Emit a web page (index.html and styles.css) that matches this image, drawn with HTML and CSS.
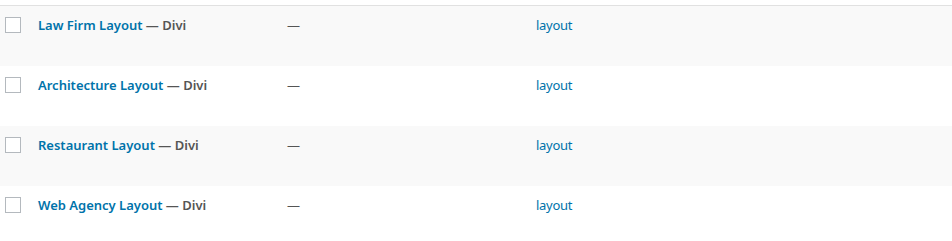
FILE: index.html
```html
<!DOCTYPE html>
<html>
    <head>
        <title>Layouts</title>
        <meta charset="UTF-8">
        <meta name="viewport" content="width=device-width, initial-scale=1.0">
        <link rel="stylesheet" href="styles.css">
    </head>
    <body>
        <div class="list-table">
            <div class="list-row alt">
                <div class="check-col"><span class="check-box"></span></div>
                <div class="title-col"><a class="row-title" href="#">Law Firm Layout</a><span class="post-state"> — Divi</span></div>
                <div class="plain-col">—</div>
                <div class="plain-col"><a class="type-link" href="#">layout</a></div>
            </div>
            <div class="list-row">
                <div class="check-col"><span class="check-box"></span></div>
                <div class="title-col"><a class="row-title" href="#">Architecture Layout</a><span class="post-state"> — Divi</span></div>
                <div class="plain-col">—</div>
                <div class="plain-col"><a class="type-link" href="#">layout</a></div>
            </div>
            <div class="list-row alt">
                <div class="check-col"><span class="check-box"></span></div>
                <div class="title-col"><a class="row-title" href="#">Restaurant Layout</a><span class="post-state"> — Divi</span></div>
                <div class="plain-col">—</div>
                <div class="plain-col"><a class="type-link" href="#">layout</a></div>
            </div>
            <div class="list-row">
                <div class="check-col"><span class="check-box"></span></div>
                <div class="title-col"><a class="row-title" href="#">Web Agency Layout</a><span class="post-state"> — Divi</span></div>
                <div class="plain-col">—</div>
                <div class="plain-col"><a class="type-link" href="#">layout</a></div>
            </div>
        </div>
    </body>
</html>
```

FILE: styles.css
```css
* {
  margin: 0;
  padding: 0;
  box-sizing: border-box;
}

body {
  font-family: "Noto Sans", "Open Sans", sans-serif;
  font-size: 13px;
  color: #555;
  background-color: #fff;
  width: 100vw;
  height: 100vh;
  overflow: hidden;
  padding-top: 5px;
}

.list-table {
  border-top: 1px solid #e1e1e1;
}

.list-row {
  display: grid;
  grid-template-columns: 28px 249px 249px 1fr;
  height: 60px;
  background-color: #fff;
}

.list-row.alt {
  background-color: #f9f9f9;
}

.check-col {
  padding: 11px 0 0 5px;
}

.check-box {
  display: block;
  width: 16px;
  height: 16px;
  border: 1px solid #b4b9be;
  background-color: #fff;
}

.title-col,
.plain-col {
  padding: 10px 10px 0 10px;
  line-height: 19px;
}

.title-col {
  font-weight: 600;
}

.row-title {
  color: #0073aa;
  text-decoration: none;
}

.post-state {
  color: #555;
}

.type-link {
  color: #0073aa;
  text-decoration: none;
  letter-spacing: -0.3px;
}
```
